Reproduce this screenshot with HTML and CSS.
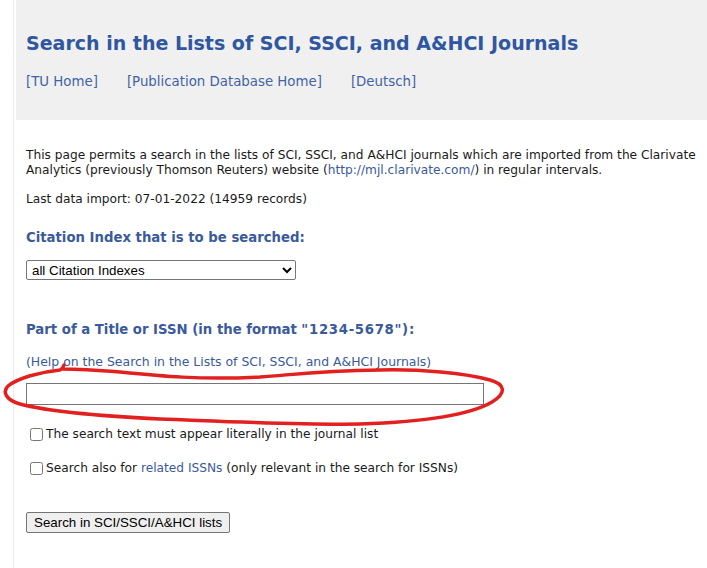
FILE: index.html
```html
<!DOCTYPE html>
<html>
<head>
<meta charset="utf-8">
<title>Search in the Lists of SCI, SSCI, and A&amp;HCI Journals</title>
<link rel="stylesheet" href="styles.css">
</head>
<body>
<div class="frame">
  <div class="header">
    <h1 class="title">Search in the Lists of SCI, SSCI, and A&amp;HCI Journals</h1>
    <div class="nav">
      <a href="#">[TU Home]</a>
      <a href="#">[Publication Database Home]</a>
      <a href="#">[Deutsch]</a>
    </div>
  </div>
  <div class="content">
    <p class="intro">This page permits a search in the lists of SCI, SSCI, and A&amp;HCI journals which are imported from the Clarivate Analytics (previously Thomson Reuters) website (<a href="#" class="url">http://mjl.clarivate.com/</a>) in regular intervals.</p>
    <p class="import">Last data import: 07-01-2022 (14959 records)</p>
    <h2 class="label">Citation Index that is to be searched:</h2>
    <select class="sel"><option>all Citation Indexes</option></select>
    <h2 class="label label2">Part of a Title or ISSN (in the format <span class="fmt">"1234-5678"):</span></h2>
    <a href="#" class="help">(Help on the Search in the Lists of SCI, SSCI, and A&amp;HCI Journals)</a>
    <div class="inputwrap">
      <input type="text" class="txt">
      <svg class="scribble" width="520" height="90" viewBox="0 0 520 90" fill="none">
        <path d="M64 15 C63 18 62 19 60 20 C40 22 18 28 8 36 C2 42 6 50 20 54 C50 62 100 66 160 69 C240 72 300 75 360 74 C420 72 470 65 492 52 C508 42 504 34 490 30 C465 23 420 19 380 20 C320 21 300 24 260 27 C200 30 160 26 120 22 C95 20 80 19 62 19" stroke="#e2201f" stroke-width="3.5" stroke-linecap="round" stroke-linejoin="round"/>
      </svg>
    </div>
    <label class="chk"><input type="checkbox"><span>The search text must appear literally in the journal list</span></label>
    <label class="chk chk2"><input type="checkbox"><span>Search also for <a href="#" class="rel">related ISSNs</a> (only relevant in the search for ISSNs)</span></label>
    <button class="btn">Search in SCI/SSCI/A&amp;HCI lists</button>
  </div>
</div>
</body>
</html>
```
FILE: styles.css
```css
html, body {
  margin: 0;
  padding: 0;
  background: #fff;
}
body {
  font-family: "DejaVu Sans", Verdana, sans-serif;
  font-size: 12.2px;
  color: #1a1a1a;
}
a {
  color: #3a5a9c;
  text-decoration: none;
}
.frame {
  margin-left: 13px;
  border-left: 1px solid #ececec;
  padding-left: 2px;
  min-height: 568px;
}
.header {
  background: #f0f0f0;
  padding: 32px 10px 0 10px;
  height: 88px;
}
.title {
  margin: 0;
  font-size: 19px;
  font-weight: bold;
  color: #2f57a1;
  line-height: 22px;
}
.nav {
  margin-top: 20px;
  font-size: 13.33px;
  line-height: 16px;
  display: flex;
  gap: 29px;
}
.nav a {
  color: #3f63a6;
}
.content {
  padding: 0 0 0 10px;
}
.intro {
  margin: 28px 0 0 0;
  line-height: 15px;
}
.import {
  margin: 14px 0 0 0;
  line-height: 15px;
}
.label {
  margin: 23px 0 0 0;
  font-size: 13.25px;
  font-weight: bold;
  color: #3a5a9c;
  line-height: 16px;
}
.fmt {
  letter-spacing: 0.7px;
}
.label2 {
  margin-top: 42px;
}
.sel {
  display: block;
  margin-top: 14px;
  width: 270px;
  height: 20px;
  font-family: "Liberation Sans", Arial, sans-serif;
  font-size: 13.33px;
  border: 1px solid #767676;
  border-radius: 2px;
  background: #fff;
  color: #000;
  padding: 0 0 0 1px;
}
.help {
  display: block;
  margin-top: 16px;
  line-height: 15px;
  font-size: 12.45px;
}
.inputwrap {
  position: relative;
  margin-top: 14px;
  width: 458px;
  height: 22px;
}
.txt {
  box-sizing: border-box;
  width: 458px;
  height: 22px;
  margin: 0;
  border: 1px solid #767676;
  display: block;
}
.scribble {
  position: absolute;
  left: -26px;
  top: -33px;
  pointer-events: none;
}
.chk {
  display: flex;
  align-items: center;
  margin-top: 22px;
  line-height: 15px;
}
.chk input {
  margin: 0 3px 0 4px;
  width: 13px;
  height: 13px;
}
.chk2 {
  margin-top: 19px;
}
.btn {
  display: block;
  margin-top: 36px;
  font-family: "Liberation Sans", Arial, sans-serif;
  font-size: 13.33px;
  padding: 1px 7px;
  height: 21px;
  border: 1px solid #767676;
  border-radius: 2px;
  background: #efefef;
  color: #000;
}
```
